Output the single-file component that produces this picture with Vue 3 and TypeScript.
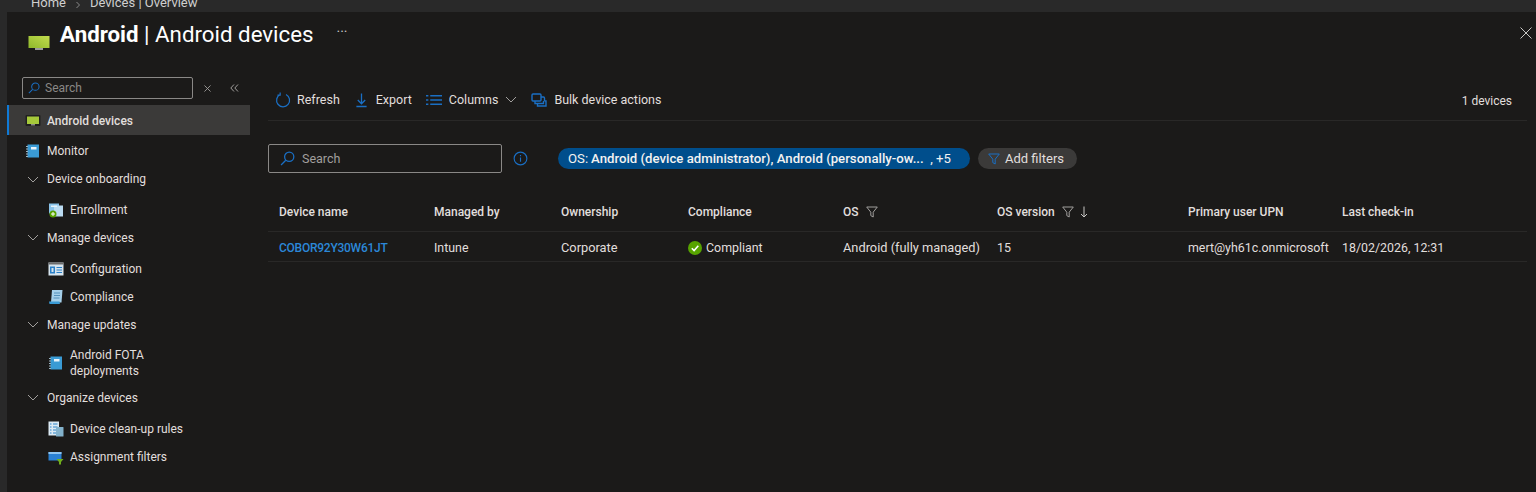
<template>
  <div class="page">
    <div class="crumbs">
      <span>Home</span>
      <svg class="crumb-chev" viewBox="0 0 6 8" width="6" height="8"><path d="M1.5 1l3 3-3 3" /></svg>
      <span>Devices | Overview</span>
    </div>

    <main class="blade">
      <header class="blade-head">
        <svg class="head-icon" viewBox="0 0 22 16" width="22" height="16">
          <defs>
            <linearGradient id="screen" x1="0" y1="1" x2="1" y2="0">
              <stop offset="0" stop-color="#8fb82b" />
              <stop offset="1" stop-color="#c2dc4e" />
            </linearGradient>
          </defs>
          <rect x="0.5" y="1" width="21" height="12" fill="url(#screen)" />
          <rect x="7" y="13" width="8" height="2" fill="#9a9a9a" />
        </svg>
        <h1 class="head-title"><b>Android</b> | Android devices</h1>
        <span class="head-more">···</span>
        <svg class="head-close" viewBox="0 0 12 12" width="12" height="12"><path d="M.5.5l11 11M11.5.5l-11 11" /></svg>
      </header>

      <div class="blade-body">
        <aside class="side">
          <div class="side-tools">
            <label class="side-search">
              <svg viewBox="0 0 14 14" width="12" height="12" class="glass"><circle cx="8.6" cy="5.4" r="4.3" /><path d="M5.4 8.6L1 13" /></svg>
              <span>Search</span>
            </label>
            <svg class="side-x" viewBox="0 0 8 8" width="7" height="7"><path d="M.5.5l7 7M7.5.5l-7 7" /></svg>
            <svg class="side-collapse" viewBox="0 0 9 8" width="9" height="8"><path d="M4 .5L.8 4 4 7.5M8 .5L4.8 4 8 7.5" /></svg>
          </div>

          <nav class="nav">
            <template v-for="item in navItems" :key="item.label">
              <div v-if="item.kind === 'group'" class="nav-group">
                <svg viewBox="0 0 12 7" width="12" height="7"><path d="M1 1l5 5 5-5" /></svg>
                <span>{{ item.label }}</span>
              </div>
              <a
                v-else
                class="nav-item"
                :class="[item.kind, { active: item.active, tall: item.tall }]"
              >
                <svg class="nav-icon" viewBox="0 0 16 16" width="16" height="16">
                  <template v-if="item.icon === 'android'">
                    <rect x="0.5" y="2" width="15" height="11" rx="1" fill="#202020" />
                    <rect x="2" y="3.5" width="12" height="7.5" fill="#a5c83a" />
                    <rect x="6" y="11" width="4" height="1.5" fill="#8a8a8a" />
                  </template>
                  <template v-else-if="item.icon === 'book'">
                    <rect x="2.5" y="1.5" width="11.5" height="13" fill="#3a9bd5" />
                    <path d="M1 3.5h2M1 6h2M1 8.5h2M1 11h2M1 13.5h2" stroke="#9fb6c4" stroke-width="1" />
                    <rect x="6" y="4" width="5.5" height="2.5" fill="#e8f3fa" />
                  </template>
                  <template v-else-if="item.icon === 'enroll'">
                    <rect x="1" y="1.5" width="10" height="10" fill="#8ac3ea" />
                    <rect x="6" y="3.5" width="9" height="11" fill="#bcdcf2" />
                    <rect x="3" y="3.5" width="6" height="1.5" fill="#e6f3fb" />
                    <circle cx="5" cy="12" r="3.5" fill="#57a300" />
                    <path d="M5 10v4M3 12h4" stroke="#fff" stroke-width="1" />
                  </template>
                  <template v-else-if="item.icon === 'config'">
                    <rect x="0.5" y="1.5" width="15" height="13" fill="#d6e4ee" />
                    <rect x="0.5" y="1.5" width="15" height="2" fill="#6c6c6c" />
                    <rect x="2" y="5.5" width="5" height="7" fill="#2a80c8" />
                    <rect x="3.5" y="7" width="2" height="4" fill="#d6e4ee" />
                    <path d="M8.5 6.5H14M8.5 9H14M8.5 11.5H14" stroke="#2a80c8" stroke-width="1" />
                  </template>
                  <template v-else-if="item.icon === 'policy'">
                    <path d="M4 1h10.5l-1 12.5H3z" fill="#a5cfe9" />
                    <path d="M1 12.5h10.5c0 1.5.5 2.5.5 2.5H1.5z" fill="#3a9bd5" />
                    <path d="M6 4h6M6 6.5h6M5.5 9h6" stroke="#3f80ad" stroke-width=".8" />
                  </template>
                  <template v-else-if="item.icon === 'cleanup'">
                    <rect x="0.5" y="0.5" width="10.5" height="14" fill="#dbe9f3" />
                    <path d="M2 3h1.5M5 3h4.5M2 6h1.5M5 6h4.5M2 9h1.5M5 9h4.5M2 12h1.5M5 12h4.5" stroke="#2f86c9" stroke-width="1.2" />
                    <rect x="8" y="6" width="7.5" height="9.5" rx=".6" fill="#83b2cc" />
                  </template>
                  <template v-else>
                    <rect x="0.5" y="3" width="13" height="8.5" fill="#2a80d2" />
                    <rect x="0.5" y="3" width="13" height="2" fill="#8ec3ee" />
                    <path d="M8.5 10h7L13 13v2.5h-2V13z" fill="#6fae1c" />
                  </template>
                </svg>
                <span>{{ item.label }}</span>
              </a>
            </template>
          </nav>
        </aside>

        <section class="content">
          <div class="toolbar">
            <button class="tool tool-refresh">
              <svg viewBox="0 0 18 18" width="16" height="16"><path d="M6 2.7A7.3 7.3 0 1 0 12.4 2.8M5.8 .5v3h-3" /></svg>
              <span>Refresh</span>
            </button>
            <button class="tool tool-export">
              <svg viewBox="0 0 14 16" width="13" height="16"><path d="M7 1v10.5M3 8l4 4 4-4M1.500 15h11" /></svg>
              <span>Export</span>
            </button>
            <button class="tool">
              <svg viewBox="0 0 17 12" width="16" height="12"><path d="M0 1.5h2.500M0 6h2.500M0 10.500h2.500M4.500 1.500H17M4.500 6H17M4.500 10.500H17" /></svg>
              <span>Columns</span>
              <svg class="tool-chev" viewBox="0 0 12 7" width="12" height="7"><path d="M1 1l5 5 5-5" /></svg>
            </button>
            <button class="tool">
              <svg viewBox="0 0 16 14" width="16" height="14"><rect x="1" y="1" width="9" height="7" rx="1" /><path d="M10 4h2.500a1 1 0 0 1 1 1v3M4 8v2.500h8.500V8M6.500 10.500V13h8.500V8h-1.500" /></svg>
              <span>Bulk device actions</span>
            </button>
            <span class="count">1 devices</span>
          </div>

          <div class="filters">
            <label class="search">
              <svg viewBox="0 0 14 14" width="15" height="15" class="glass"><circle cx="8.6" cy="5.4" r="4.3" /><path d="M5.4 8.6L1 13" /></svg>
              <span>Search</span>
            </label>
            <svg class="info" viewBox="0 0 16 16" width="15" height="15">
              <circle cx="8" cy="8" r="6.8" />
              <path d="M8 7v4.5M8 4.2v1.4" />
            </svg>
            <div class="pill pill-os">OS: <b>Android (device administrator), Android (personally-ow...</b>&nbsp;&nbsp;, +5</div>
            <div class="pill pill-add">
              <svg viewBox="0 0 12 12" width="12" height="12"><path d="M.7 1h10.6L7.2 6.2V11L4.8 9.6V6.200z" /></svg>
              Add filters
            </div>
          </div>

          <div class="table">
            <div class="row head-row">
              <div v-for="col in columns" :key="col.label" class="cell">
                {{ col.label }}
                <svg v-if="col.filter" class="col-filter" viewBox="0 0 12 12" width="12" height="12"><path d="M.7 1h10.6L7.2 6.2V11L4.8 9.6V6.200z" /></svg>
                <svg v-if="col.sort" class="col-sort" viewBox="0 0 8 12" width="8" height="12"><path d="M4 .5V11M1 8l3 3 3-3" /></svg>
              </div>
            </div>
            <div v-for="d in devices" :key="d.name" class="row body-row">
              <div class="cell link">{{ d.name }}</div>
              <div class="cell">{{ d.managedBy }}</div>
              <div class="cell wide">{{ d.ownership }}</div>
              <div class="cell">
                <svg class="ok" viewBox="0 0 14 14" width="14" height="14">
                  <circle cx="7" cy="7" r="7" fill="#57a300" />
                  <path d="M3.8 7.2l2.300 2.300 4.200-4.700" fill="none" stroke="#fff" stroke-width="1.6" />
                </svg>
                {{ d.compliance }}
              </div>
              <div class="cell wide">{{ d.os }}</div>
              <div class="cell">{{ d.version }}</div>
              <div class="cell">{{ d.upn }}</div>
              <div class="cell">{{ d.checkIn }}</div>
            </div>
          </div>
        </section>
      </div>
    </main>
  </div>
</template>

<script setup lang="ts">
interface NavItem {
  label: string
  kind: 'top' | 'child' | 'group'
  icon?: string
  active?: boolean
  tall?: boolean
}

const navItems: NavItem[] = [
  { label: 'Android devices', kind: 'top', icon: 'android', active: true },
  { label: 'Monitor', kind: 'top', icon: 'book' },
  { label: 'Device onboarding', kind: 'group' },
  { label: 'Enrollment', kind: 'child', icon: 'enroll' },
  { label: 'Manage devices', kind: 'group' },
  { label: 'Configuration', kind: 'child', icon: 'config' },
  { label: 'Compliance', kind: 'child', icon: 'policy' },
  { label: 'Manage updates', kind: 'group' },
  { label: 'Android FOTA deployments', kind: 'child', icon: 'book', tall: true },
  { label: 'Organize devices', kind: 'group' },
  { label: 'Device clean-up rules', kind: 'child', icon: 'cleanup' },
  { label: 'Assignment filters', kind: 'child', icon: 'filter' },
]

const columns = [
  { label: 'Device name' },
  { label: 'Managed by' },
  { label: 'Ownership' },
  { label: 'Compliance' },
  { label: 'OS', filter: true },
  { label: 'OS version', filter: true, sort: true },
  { label: 'Primary user UPN' },
  { label: 'Last check-in' },
]

const devices = [
  {
    name: 'COBOR92Y30W61JT',
    managedBy: 'Intune',
    ownership: 'Corporate',
    compliance: 'Compliant',
    os: 'Android (fully managed)',
    version: '15',
    upn: 'mert@yh61c.onmicrosoft',
    checkIn: '18/02/2026, 12:31',
  },
]
</script>

<style scoped>
* { box-sizing: border-box }
.page {
  width: 1536px;
  height: 492px;
  display: flex;
  flex-direction: column;
  overflow: hidden;
  background: #292929;
  color: #e1dfdd;
  font-family: Roboto, "Liberation Sans", sans-serif;
  font-size: 12px;
}
.crumbs {
  height: 12px;
  flex: none;
  display: flex;
  align-items: flex-end;
  gap: 9px;
  padding-left: 31px;
  font-size: 13px;
  line-height: 16px;
  color: #cfcfcf;
  overflow: hidden;
}
.crumbs span { flex: none; margin-bottom: 1px }
.crumb-chev { flex: none; margin-bottom: 3px }
.crumb-chev path { fill: none; stroke: #8a8a8a }
.blade {
  flex: 1;
  margin-left: 7px;
  background: #1b1a19;
  display: flex;
  flex-direction: column;
  min-height: 0;
}
.blade-head {
  height: 65px;
  flex: none;
  display: flex;
  align-items: flex-start;
  padding: 9px 4px 0 21px;
}
.head-icon { flex: none; margin-top: 14px }
.head-title {
  margin: 0 0 0 10px;
  font-size: 22.3px;
  line-height: 26px;
  font-weight: 400;
  color: #fff;
}
.head-title b { font-weight: 700 }
.head-more { margin: 3px 0 0 23px; font-size: 14px; color: #c8c6c4 }
.head-close { margin: 6px 0 0 auto; flex: none }
.head-close path { stroke: #c8c6c4; fill: none }
.blade-body { flex: 1; display: flex; min-height: 0 }

.side { width: 243px; flex: none }
.side-tools {
  display: flex;
  align-items: center;
  height: 22px;
  padding-left: 15px;
}
.side-search {
  width: 171px;
  height: 22px;
  border: 1px solid #8a8886;
  border-radius: 2px;
  display: flex;
  align-items: center;
  gap: 5px;
  padding-left: 5px;
  color: #8a8886;
}
.glass { fill: none; stroke: #1a6fc4; stroke-width: 1.2; flex: none }
.side-x { margin-left: 11px }
.side-x path, .side-collapse path { fill: none; stroke: #a19f9d }
.side-collapse { margin-left: 19px }
.nav { margin-top: 6px; display: flex; flex-direction: column }
.nav-item, .nav-group { display: flex; align-items: center; padding-top: 2px; color: #e1dfdd }
.nav-item.top {
  height: 30px;
  gap: 6px;
  border-left: 2px solid transparent;
  padding-left: 16px;
}
.nav-item.active { background: #3b3a39; border-left-color: #0f7ad6; font-weight: 500 }
.nav-group { height: 26px; padding-left: 20px; gap: 8px }
.nav-group svg { flex: none }
.nav-group svg path { fill: none; stroke: #a19f9d }
.nav-item.child { height: 28.5px; padding-left: 41px; gap: 6px }
.nav-group + .nav-item.child { margin-top: 4px }
.nav-item.tall { height: 38px; line-height: 16px; width: 170px; margin-bottom: 3px }
.nav-group + .nav-item.tall { margin-top: 6px }
.nav-icon { flex: none }

.content { flex: 1; min-width: 0; padding: 0 9px 0 18px; margin-top: -4px }
.toolbar {
  display: flex;
  align-items: center;
  height: 48px;
  border-bottom: 1px solid #292827;
  gap: 14px;
  padding: 6px 15px 0 7px;
}
.tool {
  all: unset;
  display: flex;
  align-items: center;
  gap: 7px;
  color: #e1dfdd;
  font-size: 12.5px;
}
.tool svg { fill: none; stroke: #1a6fc4; stroke-width: 1.4; flex: none }
.tool .tool-chev { stroke: #a19f9d; stroke-width: 1 }
.tool-refresh { gap: 6px; margin-right: 1px }
.tool-export { gap: 8px }
.count { margin-left: auto; margin-top: 2px; font-size: 12px }
.filters {
  display: flex;
  align-items: center;
  margin-top: 23px;
  height: 29px;
}
.search {
  width: 234px;
  height: 29px;
  border: 1px solid #8a8886;
  border-radius: 2px;
  display: flex;
  align-items: center;
  gap: 7px;
  padding-left: 11px;
  color: #a19f9d;
  font-size: 12.5px;
}
.info { margin-left: 11px; fill: none; stroke: #1a6fc4; stroke-width: 1.2; flex: none }
.pill {
  height: 21px;
  border-radius: 11px;
  display: flex;
  align-items: center;
  white-space: nowrap;
}
.pill-os {
  width: 412px;
  margin-left: 30px;
  padding-left: 10px;
  background: #004e8c;
  color: #f3f2f1;
  font-size: 13.2px;
}
.pill-os b { font-weight: 500; margin-left: 3px }
.pill-add {
  width: 99px;
  margin-left: 8px;
  padding-left: 10px;
  gap: 5px;
  background: #3b3a39;
  font-size: 13px;
}
.pill-add svg { fill: none; stroke: #1a6fc4; flex: none }
.table { margin-top: 18px }
.row {
  display: grid;
  grid-template-columns: 155px 127px 127px 155px 154px 191px 154px 1fr;
  border-bottom: 1px solid #292827;
}
.head-row { height: 41px; font-weight: 500; font-size: 12px }
.body-row { height: 30px; font-size: 12.4px }
.cell {
  display: flex;
  align-items: center;
  padding-top: 2px;
  padding-left: 11px;
  white-space: nowrap;
  min-width: 0;
}
.wide { font-size: 12.8px }
.head-row .cell { gap: 7px }
.col-filter { fill: none; stroke: #a19f9d; flex: none }
.col-sort { fill: none; stroke: #c8c6c4; margin-left: -1px; flex: none }
.link { color: #2b88d8; font-weight: 500; font-size: 12px; letter-spacing: -0.25px }
.ok { margin-right: 4px; flex: none }
</style>

<style>
html, body { margin: 0; background: #1b1a19 }
</style>
